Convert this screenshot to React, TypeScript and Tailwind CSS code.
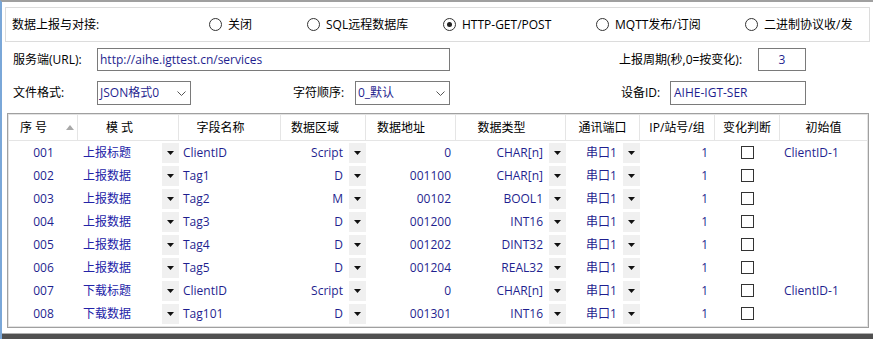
import React from "react";

type Row = {
	no: string;
	mode: string;
	name: string;
	area: string;
	addr: string;
	type: string;
	init?: string;
};

const rows: Row[] = [
	{ no: "001", mode: "上报标题", name: "ClientID", area: "Script", addr: "0", type: "CHAR[n]", init: "ClientID-1" },
	{ no: "002", mode: "上报数据", name: "Tag1", area: "D", addr: "001100", type: "CHAR[n]" },
	{ no: "003", mode: "上报数据", name: "Tag2", area: "M", addr: "00102", type: "BOOL1" },
	{ no: "004", mode: "上报数据", name: "Tag3", area: "D", addr: "001200", type: "INT16" },
	{ no: "005", mode: "上报数据", name: "Tag4", area: "D", addr: "001202", type: "DINT32" },
	{ no: "006", mode: "上报数据", name: "Tag5", area: "D", addr: "001204", type: "REAL32" },
	{ no: "007", mode: "下载标题", name: "ClientID", area: "Script", addr: "0", type: "CHAR[n]", init: "ClientID-1" },
	{ no: "008", mode: "下载数据", name: "Tag101", area: "D", addr: "001301", type: "INT16" },
];

const cols = "grid grid-cols-[69px_101px_102px_85px_90px_110px_74px_75px_65px_87px]";

function Radio({ label, checked, width }: { label: string; checked?: boolean; width: string }) {
	return (
		<div className={`flex items-center gap-[6px] ${width}`}>
			<span className="w-[13px] h-[13px] rounded-full border border-[#333] bg-white flex items-center justify-center">
				{checked && <span className="w-[5px] h-[5px] rounded-full bg-[#222]" />}
			</span>
			<span>{label}</span>
		</div>
	);
}

function Chevron() {
	return (
		<svg width="9" height="5" viewBox="0 0 9 5" className="shrink-0">
			<polyline points="0.5,0.5 4.5,4.5 8.5,0.5" fill="none" stroke="#555" strokeWidth="1" />
		</svg>
	);
}

function DropBtn() {
	return (
		<span className="w-[17px] h-[20px] bg-[#f0f0f0] flex items-center justify-center shrink-0">
			<svg width="7" height="4" viewBox="0 0 7 4">
				<polygon points="0,0 7,0 3.5,4" fill="#111" />
			</svg>
		</span>
	);
}

function App() {
	return (
		<div className="w-[873px] h-[339px] bg-white flex flex-col text-[12px] leading-[16px] text-black font-['Open_Sans','Noto_Sans_CJK_SC',sans-serif] border-l-2 border-l-[#7aa7d8] border-t-2 border-t-[#a0a0a0] overflow-hidden">
			{/* 上报方式 */}
			<div className="ml-[3px] mt-[5px] w-[865px] h-[35px] border border-[#dcdcdc] flex items-center">
				<div className="w-[203px] pl-[6px]">数据上报与对接:</div>
				<Radio label="关闭" width="w-[98px]" />
				<Radio label="SQL远程数据库" width="w-[136px]" />
				<Radio label="HTTP-GET/POST" checked width="w-[153px]" />
				<Radio label="MQTT发布/订阅" width="w-[149px]" />
				<Radio label="二进制协议收/发" width="w-[110px]" />
			</div>

			<div className="mt-[6px] h-[23px] flex items-center">
				<div className="ml-[11px] w-[84px]">服务端(URL):</div>
				<div className="w-[353px] h-[23px] border border-[#7a7a7a] flex items-center pl-[2px] text-[#1f1f8f]">
					http://aihe.igttest.cn/services
				</div>
				<div className="w-[169px]" />
				<div className="w-[139px]">上报周期(秒,0=按变化):</div>
				<div className="w-[48px] h-[23px] border border-[#7a7a7a] flex items-center justify-center text-[#1f1f8f]">3</div>
			</div>

			<div className="mt-[10px] h-[24px] flex items-center">
				<div className="ml-[11px] w-[84px]">文件格式:</div>
				<div className="w-[94px] h-[24px] border border-[#7a7a7a] flex items-center justify-between pl-[2px] pr-[4px] text-[#1f1f8f]">
					<span>JSON格式0</span>
					<Chevron />
				</div>
				<div className="w-[102px]" />
				<div className="w-[62px]">字符顺序:</div>
				<div className="w-[95px] h-[24px] border border-[#7a7a7a] flex items-center justify-between pl-[2px] pr-[4px] text-[#1f1f8f]">
					<span>0_默认</span>
					<Chevron />
				</div>
				<div className="w-[171px]" />
				<div className="w-[49px]">设备ID:</div>
				<div className="w-[136px] h-[24px] border border-[#7a7a7a] flex items-center pl-[3px] text-[#1f1f8f]">AIHE-IGT-SER</div>
			</div>

			{/* 数据表 */}
			<div className="ml-[5px] mt-[8px] w-[862px] h-[215px] border border-[#a0a0a0] shrink-0">
				<div className="h-full border border-[#e3e3e3]">
					<div className={`${cols} h-[26px] border-b border-[#e5e5e5]`}>
						<div className="flex items-center border-r border-[#e5e5e5] pl-[11px]">
							<span className="w-[46px]">序 号</span>
							<svg width="8" height="5" viewBox="0 0 8 5">
								<polygon points="0,5 8,5 4,0" fill="#a8a8a8" />
							</svg>
						</div>
						<div className="flex items-center justify-center border-r border-[#e5e5e5] pr-[17px]">模 式</div>
						<div className="flex items-center justify-center border-r border-[#e5e5e5] pr-[18px]">字段名称</div>
						<div className="flex items-center justify-center border-r border-[#e5e5e5] pr-[16px]">数据区域</div>
						<div className="flex items-center justify-center border-r border-[#e5e5e5] pr-[19px]">数据地址</div>
						<div className="flex items-center justify-center border-r border-[#e5e5e5] pr-[18px]">数据类型</div>
						<div className="flex items-center justify-center border-r border-[#e5e5e5]">通讯端口</div>
						<div className="flex items-center justify-center border-r border-[#e5e5e5]">IP/站号/组</div>
						<div className="flex items-center justify-center border-r border-[#e5e5e5]">变化判断</div>
						<div className="flex items-center justify-center">初始值</div>
					</div>
					{rows.map((r) => (
						<div key={r.no} className={`${cols} h-[23px] text-[#1f1f8f]`}>
							<div className="flex items-center justify-center">{r.no}</div>
							<div className="flex items-center justify-between pl-[5px]">
								<span className="text-[#2323a8]">{r.mode}</span>
								<DropBtn />
							</div>
							<div className="flex items-center pl-[4px]">{r.name}</div>
							<div className="flex items-center justify-end gap-[6px]">
								<span>{r.area}</span>
								<DropBtn />
							</div>
							<div className="flex items-center justify-end pr-[5px]">{r.addr}</div>
							<div className="flex items-center justify-end gap-[6px]">
								<span>{r.type}</span>
								<DropBtn />
							</div>
							<div className="flex items-center justify-between pl-[20px]">
								<span>串口1</span>
								<DropBtn />
							</div>
							<div className="flex items-center justify-end pr-[7px]">1</div>
							<div className="flex items-center justify-center">
								<span className="w-[13px] h-[13px] border border-[#333] bg-white" />
							</div>
							<div className="flex items-center pl-[4px]">{r.init}</div>
						</div>
					))}
				</div>
			</div>

			<div className="mt-auto h-[6px] border-t border-[#b0b0b0] bg-[#505050]" />
		</div>
	);
}

export default App;
